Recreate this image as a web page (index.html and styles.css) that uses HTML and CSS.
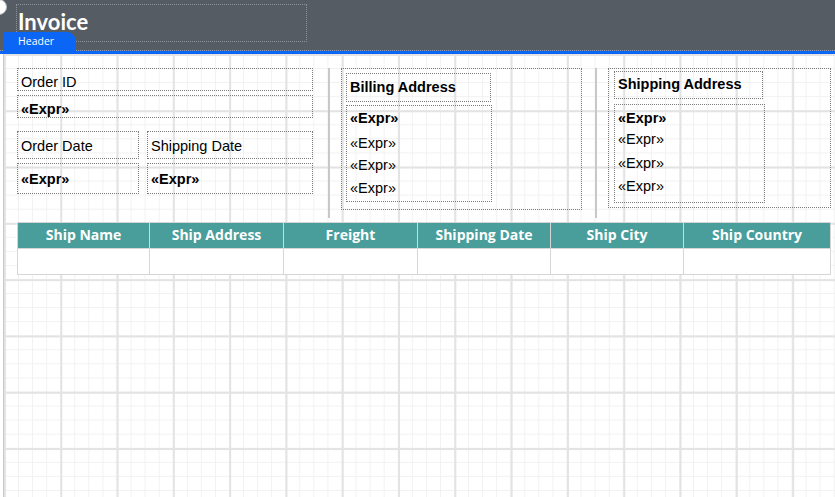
FILE: index.html
```html
<!DOCTYPE html>
<html>
<head>
<meta charset="utf-8">
<link rel="stylesheet" href="styles.css">
</head>
<body>
<div class="head">
  <div class="band">
    <div class="title-box"><span class="title">Invoice</span></div>
  </div>
  <div class="band-line"></div>
  <div class="band-tab">Header</div>
  <div class="knob"></div>
</div>
<div class="canvas">
  <div class="top">
    <div class="left-panel">
      <div class="fld f-id">Order ID</div>
      <div class="fld f-idx b">«Expr»</div>
      <div class="pair pair-1">
        <div class="fld">Order Date</div>
        <div class="fld">Shipping Date</div>
      </div>
      <div class="pair pair-2">
        <div class="fld b">«Expr»</div>
        <div class="fld b">«Expr»</div>
      </div>
    </div>
    <div class="divider"></div>
    <div class="addr billing">
      <div class="fld addr-title b">Billing Address</div>
      <div class="fld addr-data">
        <div class="ln b">«Expr»</div>
        <div class="ln">«Expr»</div>
        <div class="ln">«Expr»</div>
        <div class="ln">«Expr»</div>
      </div>
    </div>
    <div class="divider div-2"></div>
    <div class="addr shipping">
      <div class="fld addr-title b">Shipping Address</div>
      <div class="fld addr-data">
        <div class="ln b">«Expr»</div>
        <div class="ln">«Expr»</div>
        <div class="ln">«Expr»</div>
        <div class="ln">«Expr»</div>
      </div>
    </div>
  </div>
  <table class="grid-table">
    <colgroup>
      <col class="c1"><col class="c2"><col class="c3"><col class="c4"><col class="c5"><col class="c6">
    </colgroup>
    <thead>
      <tr><th>Ship Name</th><th>Ship Address</th><th>Freight</th><th>Shipping Date</th><th>Ship City</th><th>Ship Country</th></tr>
    </thead>
    <tbody>
      <tr><td></td><td></td><td></td><td></td><td></td><td></td></tr>
    </tbody>
  </table>
</div>
</body>
</html>
```
FILE: styles.css
```css
html, body {
  margin: 0;
  padding: 0;
  background: #fff;
  overflow: hidden;
}
body {
  font-family: "Liberation Sans", Arial, sans-serif;
  color: #000;
}
.head {
  position: relative;
  height: 54px;
  overflow: hidden;
}
.band {
  height: 51px;
  box-sizing: border-box;
  background: #565c63;
  border-bottom: 1px dotted #9a9fa5;
  padding: 4px 0 0 16px;
}
.band-line {
  height: 3px;
  background: #0b66f6;
}
.title-box {
  width: 291px;
  height: 38px;
  box-sizing: border-box;
  border: 1px dotted #8e9399;
  padding: 3.5px 0 0 1px;
}
.title {
  font-family: Lato, "Open Sans", sans-serif;
  font-weight: 700;
  font-size: 22px;
  line-height: 26px;
  color: #fff;
}
.band-tab {
  position: absolute;
  left: 4px;
  top: 32px;
  width: 72px;
  height: 22px;
  box-sizing: border-box;
  background: #0b66f6;
  border-top-right-radius: 9px;
  color: #fff;
  font-family: "Open Sans", sans-serif;
  font-size: 10.5px;
  line-height: 19px;
  padding-left: 14px;
}
.knob {
  position: absolute;
  left: -9px;
  top: -1px;
  width: 14px;
  height: 14px;
  border-radius: 50%;
  background: #fff;
  border: 1px solid #b9bcc0;
}
.canvas {
  margin-left: 3px;
  border-left: 1px solid #c9c9c9;
  min-height: 443px;
  box-sizing: border-box;
  padding: 14px 0 0 13px;
  background-color: #fff;
  background-image:
    linear-gradient(to right, #e3e3e3 1.5px, transparent 1.5px),
    linear-gradient(to bottom, #e3e3e3 1.5px, transparent 1.5px),
    linear-gradient(to right, #f1f1f1 1px, transparent 1px),
    linear-gradient(to bottom, #f1f1f1 1px, transparent 1px);
  background-size: 56.3px 56.3px, 56.3px 56.3px, 14.075px 14.075px, 14.075px 14.075px;
}
.top {
  display: flex;
  align-items: flex-start;
  height: 150px;
}
.fld {
  box-sizing: border-box;
  border: 1px dotted #7b7b7b;
  padding: 0 3px;
  font-size: 14.5px;
  line-height: 16px;
  white-space: nowrap;
}
.b {
  font-weight: 700;
}
.left-panel {
  width: 296px;
  display: flex;
  flex-direction: column;
}
.f-id {
  height: 23px;
  padding-top: 5px;
  margin-bottom: 4px;
}
.f-idx {
  height: 23px;
  padding-top: 4.5px;
  margin-bottom: 13px;
}
.pair {
  display: flex;
  gap: 8px;
}
.pair > .fld:first-child {
  width: 122px;
}
.pair > .fld:last-child {
  flex: 1;
}
.pair-1 {
  margin-bottom: 4px;
}
.pair-1 > .fld {
  height: 28px;
  padding-top: 6px;
}
.pair-2 > .fld {
  height: 31px;
  padding-top: 7px;
}
.divider {
  width: 2px;
  height: 150px;
  background: #c8c8c8;
  margin: 0 11px 0 15px;
}
.div-2 {
  margin-left: 13px;
}
.addr {
  box-sizing: border-box;
  border: 1px dotted #7b7b7b;
  display: flex;
  flex-direction: column;
  align-items: flex-start;
}
.billing {
  width: 241px;
  height: 142px;
  padding: 4px 0 0 4px;
}
.billing .addr-title {
  width: 145px;
  height: 29px;
  padding-top: 4.5px;
  margin-bottom: 3px;
}
.billing .addr-data {
  width: 146px;
  height: 97px;
  padding-top: 1px;
}
.billing .ln {
  line-height: 22.5px;
}
.billing .ln:first-child {
  margin-bottom: 2px;
}
.shipping {
  width: 223px;
  height: 140px;
  padding: 2px 0 0 5px;
}
.shipping .addr-title {
  width: 149px;
  height: 28px;
  padding-top: 4px;
  margin-bottom: 5px;
}
.shipping .addr-data {
  width: 151px;
  height: 99px;
  padding-top: 3px;
}
.shipping .ln {
  line-height: 20px;
}
.shipping .ln:nth-child(1) {
  margin-bottom: 1.3px;
}
.shipping .ln:nth-child(2) {
  margin-bottom: 4px;
}
.shipping .ln:nth-child(3) {
  margin-bottom: 2.4px;
}
.grid-table {
  margin-top: 3.5px;
  width: 813px;
  table-layout: fixed;
  border-collapse: collapse;
  border: 1px solid #d2d2d2;
}
.c1 { width: 132px; }
.c2 { width: 134px; }
.c3 { width: 134px; }
.c4 { width: 133px; }
.c5 { width: 133px; }
.c6 { width: 147px; }
.grid-table th {
  background: #499e9b;
  color: #fff;
  font-family: "Open Sans", sans-serif;
  font-weight: 700;
  font-size: 14px;
  line-height: 18px;
  height: 26px;
  box-sizing: border-box;
  padding: 0;
  border: 1px solid #d6d6d6;
  text-align: center;
  white-space: nowrap;
}
.grid-table td {
  background: #fff;
  height: 26px;
  box-sizing: border-box;
  padding: 0;
  border: 1px solid #d6d6d6;
}
```
